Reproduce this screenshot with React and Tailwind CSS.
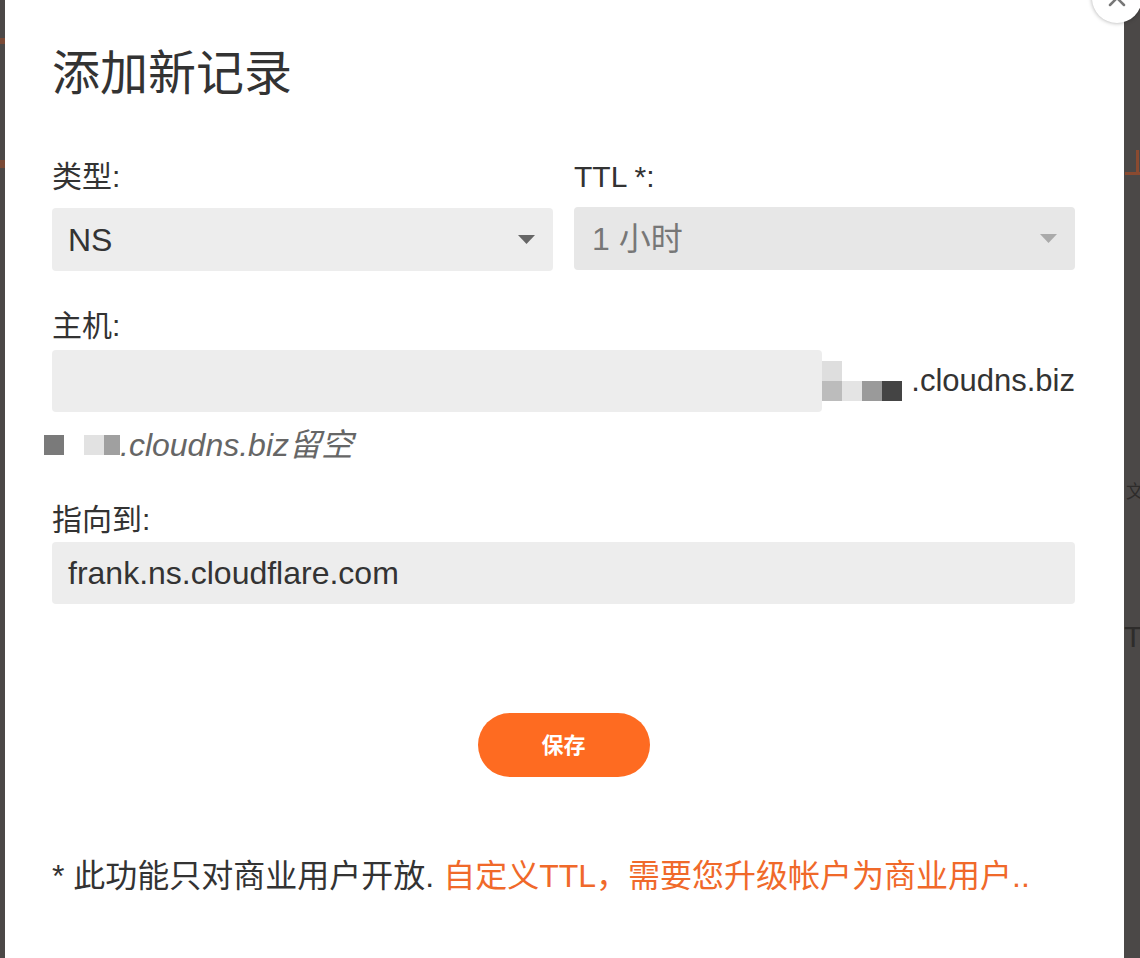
import React from "react";

const font = { fontFamily: '"Liberation Sans", "Noto Sans CJK SC", sans-serif' };

const Caret = ({ color }) => (
  <svg width="17" height="9" viewBox="0 0 17 9" className="shrink-0">
    <path d="M0 0 H17 L8.5 9 Z" fill={color} />
  </svg>
);

const Label = ({ children, className = "" }) => (
  <div className={`text-[30px] leading-[30px] text-[#333] ${className}`}>{children}</div>
);

const App = () => {
  return (
    <div className="relative w-[1140px] h-[958px] overflow-hidden bg-[#4b4847] flex" style={font}>
      {/* page behind the overlay, only the edges show */}
      <div className="absolute left-0 top-[38px] w-[5px] h-[6px] bg-[#7a4a36]" />
      <div className="absolute left-0 top-[160px] w-[5px] h-[8px] bg-[#7a4a36]" />
      <div className="absolute left-[1136px] top-[150px] w-[3px] h-[24px] bg-[#8a4a30]" />
      <div className="absolute left-[1125px] top-[172px] w-[15px] h-[3px] bg-[#8a4a30]" />
      <div className="absolute left-[1126px] top-[482px] text-[18px] leading-[20px] text-[#2e2c2b]">文</div>
      <div className="absolute left-[1124px] top-[622px] text-[30px] leading-[30px] text-[#2e2c2b]">TT</div>

      {/* modal */}
      <div className="ml-[5px] w-[1119px] h-full bg-white pl-[47px] pr-[49px] relative">
        <div className="pt-[50px] text-[48px] leading-[48px] text-[#333]">添加新记录</div>

        <div className="mt-[64px] flex gap-[21px]">
          <div className="flex-1">
            <Label className="mb-[16px]">类型:</Label>
            <div className="h-[63px] rounded-[4px] bg-[#ededed] flex items-center justify-between pl-[16px] pr-[18px]">
              <span className="text-[32px] text-[#333]">NS</span>
              <Caret color="#666" />
            </div>
          </div>
          <div className="flex-1">
            <Label className="mb-[16px]">TTL *:</Label>
            <div className="h-[63px] -mt-px rounded-[4px] bg-[#e7e7e7] flex items-center justify-between pl-[18px] pr-[18px]">
              <span className="text-[32px] text-[#777]">1 小时</span>
              <Caret color="#aaa" />
            </div>
          </div>
        </div>

        <Label className="mt-[40px] mb-[9px]">主机:</Label>
        <div className="flex items-center">
          <div className="w-[770px] h-[62px] rounded-[4px] bg-[#ededed]" />
          <div className="w-[88px] flex flex-col">
            <div className="flex">
              <div className="w-[20px] h-[20px] bg-[#dedede]" />
            </div>
            <div className="flex">
              <div className="w-[20px] h-[20px] bg-[#bcbcbc]" />
              <div className="w-[20px] h-[20px] bg-[#e4e4e4]" />
              <div className="w-[20px] h-[20px] bg-[#9a9a9a]" />
              <div className="w-[20px] h-[20px] bg-[#444]" />
            </div>
          </div>
          <span className="text-[31px] text-[#333] ml-auto">.cloudns.biz</span>
        </div>

        <div className="mt-[18px] -ml-[8px] flex items-center h-[30px]">
          <div className="w-[20px] h-[20px] bg-[#7a7a7a]" />
          <div className="ml-[20px] w-[20px] h-[20px] bg-[#e2e2e2]" />
          <div className="w-[16px] h-[20px] bg-[#a0a0a0]" />
          <span className="text-[32px] leading-[30px] italic text-[#666]">.cloudns.biz留空</span>
        </div>

        <Label className="mt-[45px] mb-[7px]">指向到:</Label>
        <div className="h-[62px] rounded-[4px] bg-[#ededed] flex items-center pl-[16px]">
          <span className="text-[32px] text-[#333]">frank.ns.cloudflare.com</span>
        </div>

        <div className="mt-[109px] flex justify-center">
          <button className="w-[172px] h-[64px] rounded-full bg-[#fe6b21] text-white text-[22px] font-bold">
            保存
          </button>
        </div>

        <div className="mt-[83px] text-[32px] leading-[32px] text-[#333] whitespace-nowrap">
          * 此功能只对商业用户开放. <span className="text-[#f0692a]">自定义TTL，需要您升级帐户为商业用户..</span>
        </div>
      </div>

      {/* close button */}
      <div className="absolute left-[1092px] top-[-27px] w-[50px] h-[50px] rounded-full bg-white shadow-[0_0_4px_rgba(0,0,0,0.35)] flex items-center justify-center">
        <svg width="20" height="20" viewBox="0 0 20 20">
          <path d="M3 3 L17 17 M17 3 L3 17" stroke="#777" strokeWidth="2.5" strokeLinecap="round" />
        </svg>
      </div>
    </div>
  );
};

export default App;
